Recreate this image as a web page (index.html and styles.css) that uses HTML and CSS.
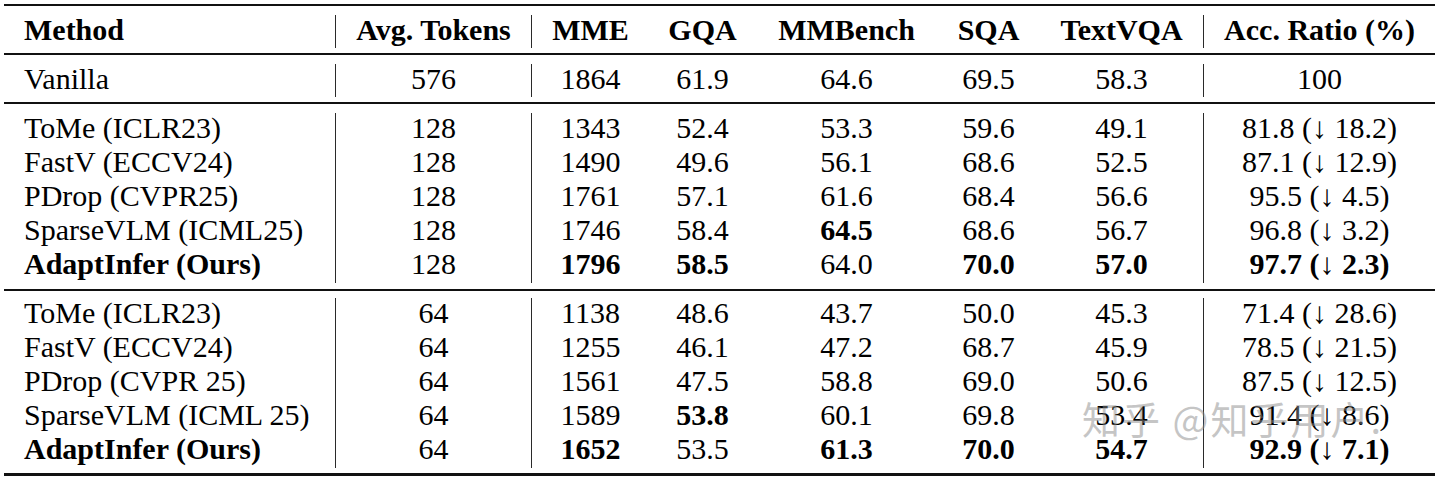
FILE: index.html
```html
<!DOCTYPE html>
<html lang="en">
<head>
  <meta charset="UTF-8">
  <title>Token Pruning Results</title>
  <link rel="stylesheet" href="styles.css">
</head>
<body>

  <!-- Results table -->
  <table class="results">
    <colgroup>
      <col class="c-method">
      <col class="c-tokens">
      <col class="c-mme">
      <col class="c-gqa">
      <col class="c-mmb">
      <col class="c-sqa">
      <col class="c-tvqa">
      <col class="c-acc">
    </colgroup>

    <tr class="rule"><td colspan="8"><div class="line top"></div></td></tr>

    <tr class="head">
      <td class="method">Method</td>
      <td class="bar">Avg. Tokens</td>
      <td class="bar">MME</td>
      <td>GQA</td>
      <td>MMBench</td>
      <td>SQA</td>
      <td>TextVQA</td>
      <td class="bar">Acc. Ratio (%)</td>
    </tr>

    <tr class="rule"><td colspan="8"><div class="line mid"></div></td></tr>

    <tr class="short">
      <td class="method">Vanilla</td>
      <td class="bar">576</td>
      <td class="bar">1864</td>
      <td>61.9</td>
      <td>64.6</td>
      <td>69.5</td>
      <td>58.3</td>
      <td class="bar">100</td>
    </tr>

    <tr class="rule"><td colspan="8"><div class="line mid"></div></td></tr>

    <!-- 128 tokens -->
    <tr>
      <td class="method">ToMe (ICLR23)</td>
      <td class="bar">128</td>
      <td class="bar">1343</td>
      <td>52.4</td>
      <td>53.3</td>
      <td>59.6</td>
      <td>49.1</td>
      <td class="bar">81.8 (<span class="arrow">↓</span> 18.2)</td>
    </tr>
    <tr>
      <td class="method">FastV (ECCV24)</td>
      <td class="bar">128</td>
      <td class="bar">1490</td>
      <td>49.6</td>
      <td>56.1</td>
      <td>68.6</td>
      <td>52.5</td>
      <td class="bar">87.1 (<span class="arrow">↓</span> 12.9)</td>
    </tr>
    <tr>
      <td class="method">PDrop (CVPR25)</td>
      <td class="bar">128</td>
      <td class="bar">1761</td>
      <td>57.1</td>
      <td>61.6</td>
      <td>68.4</td>
      <td>56.6</td>
      <td class="bar">95.5 (<span class="arrow">↓</span> 4.5)</td>
    </tr>
    <tr>
      <td class="method">SparseVLM (ICML25)</td>
      <td class="bar">128</td>
      <td class="bar">1746</td>
      <td>58.4</td>
      <td class="best">64.5</td>
      <td>68.6</td>
      <td>56.7</td>
      <td class="bar">96.8 (<span class="arrow">↓</span> 3.2)</td>
    </tr>
    <tr>
      <td class="method best">AdaptInfer (Ours)</td>
      <td class="bar">128</td>
      <td class="bar best">1796</td>
      <td class="best">58.5</td>
      <td>64.0</td>
      <td class="best">70.0</td>
      <td class="best">57.0</td>
      <td class="bar best">97.7 (<span class="arrow">↓</span> 2.3)</td>
    </tr>

    <tr class="rule"><td colspan="8"><div class="line mid group"></div></td></tr>

    <!-- 64 tokens -->
    <tr>
      <td class="method">ToMe (ICLR23)</td>
      <td class="bar">64</td>
      <td class="bar">1138</td>
      <td>48.6</td>
      <td>43.7</td>
      <td>50.0</td>
      <td>45.3</td>
      <td class="bar">71.4 (<span class="arrow">↓</span> 28.6)</td>
    </tr>
    <tr>
      <td class="method">FastV (ECCV24)</td>
      <td class="bar">64</td>
      <td class="bar">1255</td>
      <td>46.1</td>
      <td>47.2</td>
      <td>68.7</td>
      <td>45.9</td>
      <td class="bar">78.5 (<span class="arrow">↓</span> 21.5)</td>
    </tr>
    <tr>
      <td class="method">PDrop (CVPR 25)</td>
      <td class="bar">64</td>
      <td class="bar">1561</td>
      <td>47.5</td>
      <td>58.8</td>
      <td>69.0</td>
      <td>50.6</td>
      <td class="bar">87.5 (<span class="arrow">↓</span> 12.5)</td>
    </tr>
    <tr>
      <td class="method">SparseVLM (ICML 25)</td>
      <td class="bar">64</td>
      <td class="bar">1589</td>
      <td class="best">53.8</td>
      <td>60.1</td>
      <td>69.8</td>
      <td>53.4</td>
      <td class="bar">91.4 (<span class="arrow">↓</span> 8.6)</td>
    </tr>
    <tr>
      <td class="method best">AdaptInfer (Ours)</td>
      <td class="bar">64</td>
      <td class="bar best">1652</td>
      <td>53.5</td>
      <td class="best">61.3</td>
      <td class="best">70.0</td>
      <td class="best">54.7</td>
      <td class="bar best">92.9 (<span class="arrow">↓</span> 7.1)</td>
    </tr>

    <tr class="rule"><td colspan="8"><div class="line bottom"></div></td></tr>
  </table>

  <!-- watermark over the table -->
  <div class="watermark">知乎 @知乎用户.</div>

</body>
</html>
```

FILE: styles.css
```css
body {
  margin: 0;
  background-color: #fff;
  font-family: "Liberation Serif", "Times New Roman", serif;
  color: #000;
}

.results {
  margin: 4px 0 0 4px;
  width: 1431px;
  table-layout: fixed;
  border-collapse: separate;
  border-spacing: 0;
  font-size: 30px;
}

.c-method { width: 331px; }
.c-tokens { width: 196px; }
.c-mme { width: 118px; }
.c-gqa { width: 107px; }
.c-mmb { width: 181px; }
.c-sqa { width: 103px; }
.c-tvqa { width: 163px; }
.c-acc { width: 232px; }

.results td {
  padding: 0 0 5px;
  line-height: 29px;
  text-align: center;
  white-space: nowrap;
  vertical-align: top;
}

.results tr.head td,
.results tr.short td {
  padding-bottom: 4px;
}

.results tr.head td {
  font-weight: bold;
}

.results td.method {
  text-align: left;
  padding-left: 20px;
}

.results td.bar {
  border-left: 1px solid #2a2a2a;
}

.results td.best {
  font-weight: bold;
}

/* arrow stays light even in bold cells */
.arrow {
  font-weight: normal;
  line-height: 0;
}

/* booktabs style rules */
.results tr.rule td {
  padding: 0;
  line-height: 0;
}

.line {
  border-top: 2px solid #111;
}

.line.top {
  margin-bottom: 9px;
}

.line.mid {
  margin: 5px 0 9px;
}

.line.mid.group {
  margin: 6px 0 7px;
}

.line.bottom {
  margin-top: 5px;
  border-top-width: 3px;
}

.watermark {
  position: absolute;
  left: 1082px;
  top: 398px;
  font-family: "Noto Sans CJK SC", sans-serif;
  font-size: 38px;
  line-height: 40px;
  letter-spacing: 2px;
  color: rgba(140, 140, 140, 0.5);
  white-space: nowrap;
}
```
